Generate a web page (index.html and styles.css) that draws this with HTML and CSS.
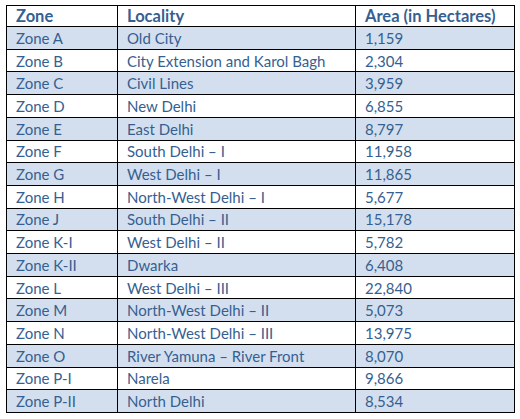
FILE: index.html
```html
<!DOCTYPE html>
<html lang="en">
<head>
    <meta charset="UTF-8">
    <meta name="viewport" content="width=device-width, initial-scale=1.0">
    <title>Delhi Zones</title>
    <link rel="stylesheet" href="styles.css">
</head>
<body>

    <table class="zones">
        <colgroup>
            <col class="col-zone">
            <col class="col-locality">
            <col class="col-area">
        </colgroup>
        <thead>
            <tr><th>Zone</th><th>Locality</th><th>Area (in Hectares)</th></tr>
        </thead>
        <tbody>
            <tr><td>Zone A</td><td>Old City</td><td>1,159</td></tr>
            <tr><td>Zone B</td><td>City Extension and Karol Bagh</td><td>2,304</td></tr>
            <tr><td>Zone C</td><td>Civil Lines</td><td>3,959</td></tr>
            <tr><td>Zone D</td><td>New Delhi</td><td>6,855</td></tr>
            <tr><td>Zone E</td><td>East Delhi</td><td>8,797</td></tr>
            <tr><td>Zone F</td><td>South Delhi – I</td><td>11,958</td></tr>
            <tr><td>Zone G</td><td>West Delhi – I</td><td>11,865</td></tr>
            <tr><td>Zone H</td><td>North-West Delhi – I</td><td>5,677</td></tr>
            <tr><td>Zone J</td><td>South Delhi – II</td><td>15,178</td></tr>
            <tr><td>Zone K-I</td><td>West Delhi – II</td><td>5,782</td></tr>
            <tr><td>Zone K-II</td><td>Dwarka</td><td>6,408</td></tr>
            <tr><td>Zone L</td><td>West Delhi – III</td><td>22,840</td></tr>
            <tr><td>Zone M</td><td>North-West Delhi – II</td><td>5,073</td></tr>
            <tr><td>Zone N</td><td>North-West Delhi – III</td><td>13,975</td></tr>
            <tr><td>Zone O</td><td>River Yamuna – River Front</td><td>8,070</td></tr>
            <tr><td>Zone P-I</td><td>Narela</td><td>9,866</td></tr>
            <tr><td>Zone P-II</td><td>North Delhi</td><td>8,534</td></tr>
        </tbody>
    </table>

</body>
</html>
```

FILE: styles.css
```css
body {
    font-family: Lato, "Open Sans", sans-serif;
    background-color: #ffffff;
    margin: 0;
    padding: 5px 0 0 6px;
}
.zones {
    border-collapse: collapse;
    table-layout: fixed;
    width: 508px;
    height: 408px;
    color: #365f91;
    font-size: 15px;
}
.col-zone {
    width: 111px;
}
.col-locality {
    width: 238px;
}
.col-area {
    width: 159px;
}
.zones th,
.zones td {
    border: 1px solid #000;
    padding: 0 0 0 9px;
    text-align: left;
    white-space: nowrap;
    vertical-align: middle;
}
.zones th {
    font-size: 16.5px;
    font-weight: bold;
}
.zones tbody tr:nth-child(odd) {
    background-color: #d3dfee;
}
```
